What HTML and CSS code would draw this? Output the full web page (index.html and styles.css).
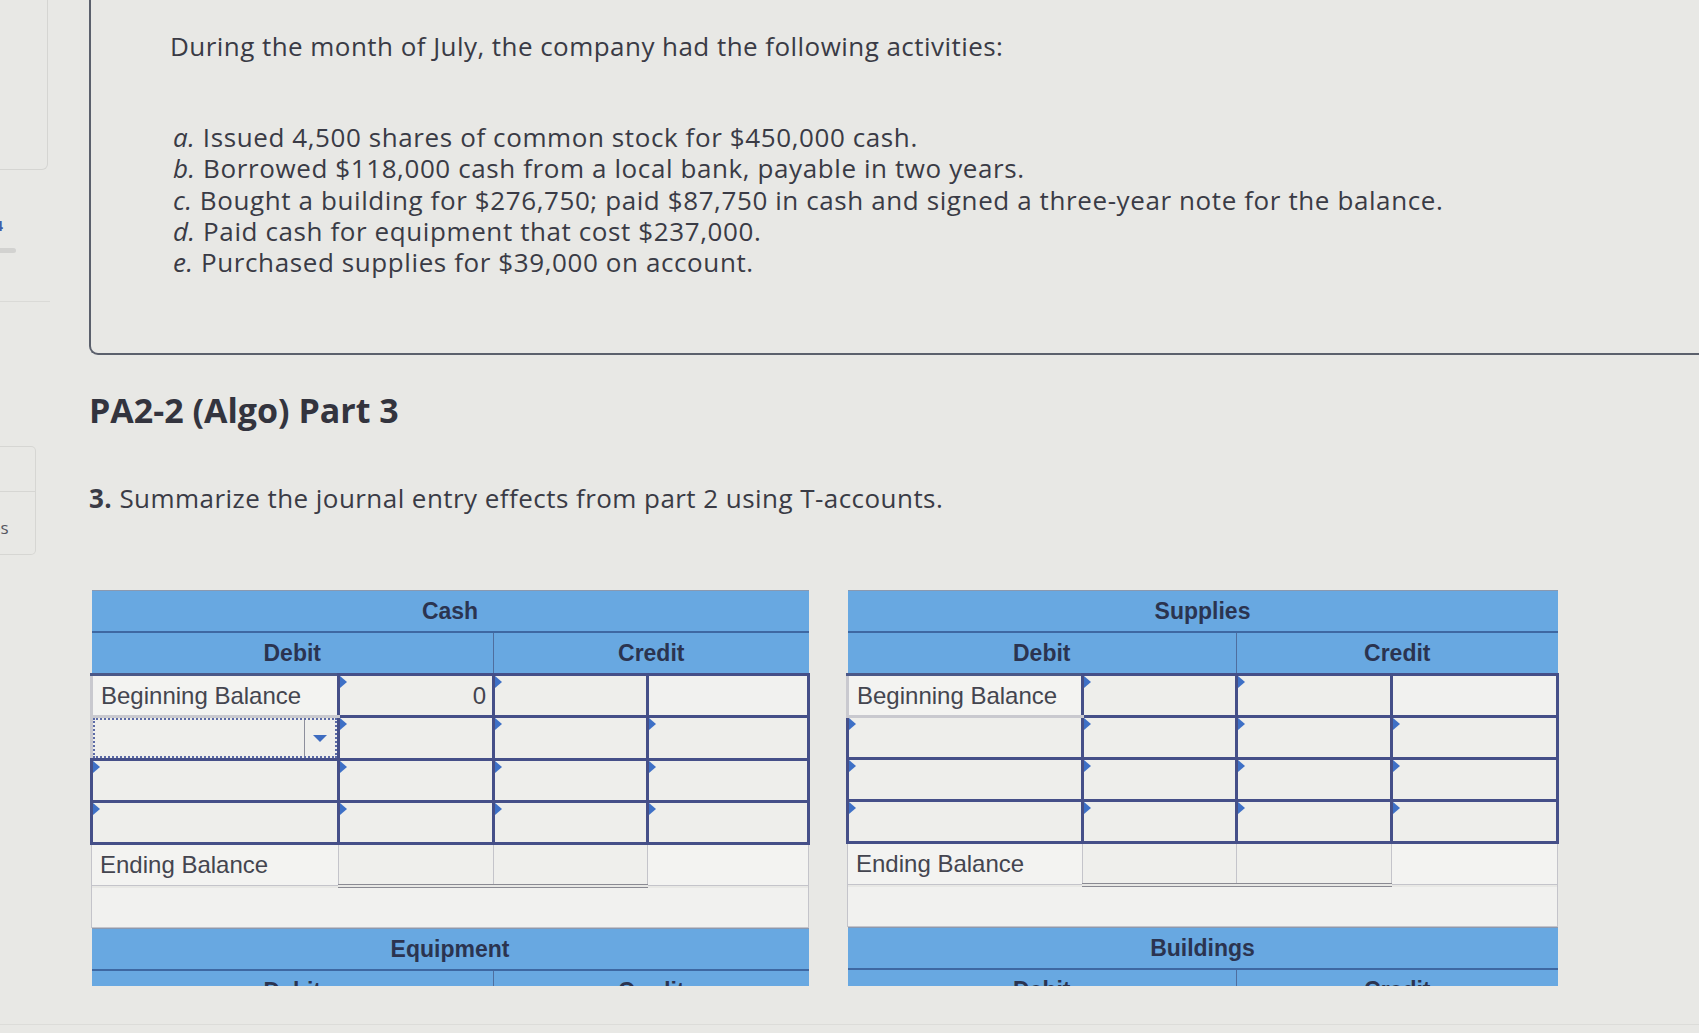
FILE: index.html
```html
<!DOCTYPE html>
<html lang="en">
<head>
<meta charset="utf-8">
<title>PA2-2 (Algo) Part 3</title>
<link rel="stylesheet" href="styles.css">
</head>
<body>
<div class="page">
  <aside class="side">
    <div class="side-card"></div>
    <div class="side-num">4</div>
    <div class="side-bar"></div>
    <div class="side-rule"></div>
    <div class="side-nav">
      <div class="side-nav-item"></div>
      <div class="side-nav-item">es</div>
    </div>
  </aside>
  <main class="main">
    <section class="intro">
      <p class="intro-lead">During the month of July, the company had the following activities:</p>
      <ol class="acts">
        <li><i>a.</i> Issued 4,500 shares of common stock for $450,000 cash.</li>
        <li><i>b.</i> Borrowed $118,000 cash from a local bank, payable in two years.</li>
        <li><i>c.</i> Bought a building for $276,750; paid $87,750 in cash and signed a three-year note for the balance.</li>
        <li><i>d.</i> Paid cash for equipment that cost $237,000.</li>
        <li><i>e.</i> Purchased supplies for $39,000 on account.</li>
      </ol>
    </section>
    <h2 class="part">PA2-2 (Algo) Part 3</h2>
    <p class="question"><b>3.</b> Summarize the journal entry effects from part 2 using T-accounts.</p>

    <div class="accounts">
      <div class="acct-col">
        <table class="t t-left">
          <colgroup><col class="c1"><col class="c2"><col class="c3"><col class="c4"></colgroup>
          <tr class="title"><th colspan="4">Cash</th></tr>
          <tr class="sub"><th colspan="2">Debit</th><th colspan="2">Credit</th></tr>
          <tr class="in">
            <td class="lbl">Beginning Balance</td>
            <td class="amt m">0</td>
            <td class="m"></td>
            <td class="plain"></td>
          </tr>
          <tr class="in">
            <td class="dd-cell"><div class="dd"><span class="dd-val"></span><span class="dd-btn"><span class="caret"></span></span></div></td>
            <td class="m"></td>
            <td class="m"></td>
            <td class="m"></td>
          </tr>
          <tr class="in">
            <td class="m"></td><td class="m"></td><td class="m"></td><td class="m"></td>
          </tr>
          <tr class="in">
            <td class="m"></td><td class="m"></td><td class="m"></td><td class="m"></td>
          </tr>
          <tr class="end">
            <td class="lbl">Ending Balance</td>
            <td class="tot"></td>
            <td class="tot"></td>
            <td></td>
          </tr>
          <tr class="blank"><td colspan="4"></td></tr>
        </table>
        <table class="t t-left">
          <colgroup><col class="c1"><col class="c2"><col class="c3"><col class="c4"></colgroup>
          <tr class="title"><th colspan="4">Equipment</th></tr>
          <tr class="sub"><th colspan="2">Debit</th><th colspan="2">Credit</th></tr>
          <tr class="in">
            <td class="lbl">Beginning Balance</td>
            <td class="amt m"></td>
            <td class="m"></td>
            <td class="plain"></td>
          </tr>
        </table>
      </div>

      <div class="acct-col">
        <table class="t t-right">
          <colgroup><col class="c1"><col class="c2"><col class="c3"><col class="c4"></colgroup>
          <tr class="title"><th colspan="4">Supplies</th></tr>
          <tr class="sub"><th colspan="2">Debit</th><th colspan="2">Credit</th></tr>
          <tr class="in">
            <td class="lbl">Beginning Balance</td>
            <td class="amt m"></td>
            <td class="m"></td>
            <td class="plain"></td>
          </tr>
          <tr class="in">
            <td class="m"></td><td class="m"></td><td class="m"></td><td class="m"></td>
          </tr>
          <tr class="in">
            <td class="m"></td><td class="m"></td><td class="m"></td><td class="m"></td>
          </tr>
          <tr class="in">
            <td class="m"></td><td class="m"></td><td class="m"></td><td class="m"></td>
          </tr>
          <tr class="end">
            <td class="lbl">Ending Balance</td>
            <td class="tot"></td>
            <td class="tot"></td>
            <td></td>
          </tr>
          <tr class="blank"><td colspan="4"></td></tr>
        </table>
        <table class="t t-right">
          <colgroup><col class="c1"><col class="c2"><col class="c3"><col class="c4"></colgroup>
          <tr class="title"><th colspan="4">Buildings</th></tr>
          <tr class="sub"><th colspan="2">Debit</th><th colspan="2">Credit</th></tr>
          <tr class="in">
            <td class="lbl">Beginning Balance</td>
            <td class="amt m"></td>
            <td class="m"></td>
            <td class="plain"></td>
          </tr>
        </table>
      </div>
    </div>
  </main>
</div>
<footer class="foot"><div class="foot-rule"></div></footer>
</body>
</html>
```

FILE: styles.css
```css
html, body {
  margin: 0;
  padding: 0;
}

body {
  background: #e8e8e5;
  color: #3a3b45;
  font-family: "Open Sans", Lato, "Liberation Sans", sans-serif;
  overflow: hidden;
}

.page {
  display: flex;
  height: 986px;
  overflow: hidden;
}

/* left sidebar remnants */
.side {
  width: 89px;
  flex: none;
  display: flex;
  flex-direction: column;
}

.side-card {
  width: 48px;
  height: 176px;
  margin-top: -6px;
  border: 1px solid #d5d5d2;
  border-left: none;
  border-radius: 0 6px 6px 0;
  box-sizing: border-box;
}

.side-num {
  margin-top: 48px;
  margin-left: -5px;
  font-size: 14px;
  font-weight: 700;
  color: #3f5ea8;
  line-height: 16px;
}

.side-bar {
  width: 16px;
  height: 5px;
  margin-top: 14px;
  background: #d2d2d0;
  border-radius: 0 3px 3px 0;
}

.side-rule {
  width: 50px;
  height: 1px;
  margin-top: 48px;
  background: #dadad7;
}

.side-nav {
  width: 35px;
  margin-top: 144px;
  border: 1px solid #d6d6d3;
  border-left: none;
  border-radius: 0 5px 5px 0;
}

.side-nav-item {
  height: 44px;
  font-size: 17px;
  line-height: 44px;
  color: #55565f;
  margin-left: -9px;
}

.side-nav-item + .side-nav-item {
  border-top: 1px solid #d6d6d3;
  line-height: 72px;
  height: 62px;
}

/* main */
.main {
  flex: 1;
  min-width: 0;
}

.intro {
  border-left: 2px solid #5b606c;
  border-bottom: 2px solid #5b606c;
  border-bottom-left-radius: 9px;
  padding: 31px 0 75px 79px;
  margin-right: -20px;
}

.intro-lead {
  margin: 0 0 60px;
  font-size: 26px;
  line-height: 31px;
  letter-spacing: 0.45px;
}

.acts {
  list-style: none;
  margin: 0;
  padding: 0 0 0 3px;
  font-size: 26px;
  line-height: 31.3px;
  letter-spacing: 0.6px;
}

.acts i {
  font-style: italic;
}

.part {
  margin: 35px 0 0;
  font-size: 34px;
  line-height: 40px;
  font-weight: 700;
  color: #33343e;
}

.question {
  margin: 53px 0 0;
  font-size: 26px;
  line-height: 31px;
  letter-spacing: 0.45px;
}

.question b {
  font-weight: 700;
}

/* T-accounts */
.accounts {
  display: grid;
  grid-template-columns: 717px 710px;
  column-gap: 39px;
  margin-top: 76px;
  margin-left: 1px;
}

.t {
  border-collapse: collapse;
  table-layout: fixed;
  width: 100%;
  font-family: "Liberation Sans", Arial, sans-serif;
  font-size: 24px;
  color: #44454f;
}

.t-left .c1 { width: 247px; }
.t-left .c2 { width: 155px; }
.t-left .c3 { width: 154px; }
.t-left .c4 { width: 161px; }

.t-right .c1 { width: 235px; }
.t-right .c2 { width: 154px; }
.t-right .c3 { width: 155px; }
.t-right .c4 { width: 166px; }

.t th {
  background: #68a8e1;
  color: #2b3450;
  font-size: 23px;
  font-weight: 700;
  height: 40px;
  padding: 0;
  text-align: center;
}

.t .title th {
  border-top: 1px solid #8a99b0;
  border-bottom: 2px solid #3e68a2;
}

.t .sub th {
  border-bottom: 2px solid #4a5888;
}

.t .sub th + th {
  border-left: 1px solid #4f6e9e;
}

.t td {
  height: 42px;
  padding: 0 6px;
  background: #eeeeeb;
  border: 3px solid #454f88;
  position: relative;
  box-sizing: border-box;
  white-space: nowrap;
}

.t td.lbl {
  background: #f3f3f1;
  padding-left: 8px;
  border-color: #c9c9cf;
  border-right-color: #454f88;
}

.t .in td.lbl {
  border-top-color: #4a5888;
}

.t td.plain {
  background: #f1f1ef;
}

.t td.amt {
  text-align: right;
  padding-right: 6px;
}

/* input indicator flag */
.t td.m::before {
  content: "";
  position: absolute;
  left: 0;
  top: 0;
  border-left: 7px solid #3e70c6;
  border-top: 6px solid transparent;
  border-bottom: 6px solid transparent;
}

/* dropdown cell */
.t td.dd-cell {
  padding: 0;
  background: #efefec;
  border-left-color: #c9c9cf;
}

.dd {
  display: flex;
  height: 40px;
  border: 2px dotted #5b6aa6;
  box-sizing: border-box;
}

.dd-val {
  flex: 1;
}

.dd-btn {
  width: 30px;
  border-left: 1px solid #8d8f9c;
  display: flex;
  align-items: center;
  justify-content: center;
}

.caret {
  width: 0;
  height: 0;
  border-left: 7px solid transparent;
  border-right: 7px solid transparent;
  border-top: 7px solid #3e6cc0;
}

/* ending balance */
.t .end td {
  background: #f3f3f1;
  border: 1px solid #c4c4ca;
  border-top: 3px solid #454f88;
}

.t .end td.tot {
  background: #efefec;
  border-bottom: 4px double #8a8a92;
}

.t .blank td {
  height: 42px;
  background: #f1f1ef;
  border: 1px solid #c4c4ca;
}

/* footer strip */
.foot {
  height: 47px;
  display: flex;
  flex-direction: column;
  justify-content: flex-end;
}

.foot-rule {
  height: 1px;
  background: #dcdcd9;
  margin-bottom: 8px;
}
```
